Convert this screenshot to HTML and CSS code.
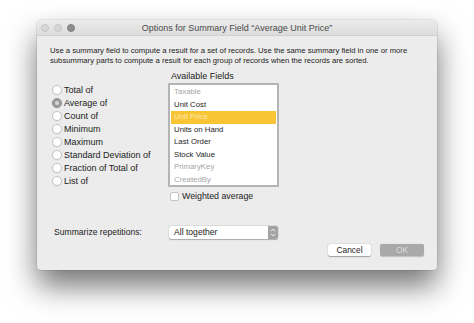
FILE: index.html
```html
<!DOCTYPE html>
<html>
<head>
<meta charset="utf-8">
<link rel="stylesheet" href="styles.css">
</head>
<body>
<div class="window">
  <div class="titlebar">
    <div class="lights">
      <span class="light"></span>
      <span class="light"></span>
      <span class="light dark"></span>
    </div>
    <div class="title">Options for Summary Field “Average Unit Price”</div>
  </div>
  <div class="content">
    <p class="desc">Use a summary field to compute a result for a set of records. Use the same summary field in one or more subsummary parts to compute a result for each group of records when the records are sorted.</p>
    <div class="main">
      <div class="radios">
        <div class="radio-row"><span class="radio"></span>Total of</div>
        <div class="radio-row"><span class="radio on"></span>Average of</div>
        <div class="radio-row"><span class="radio"></span>Count of</div>
        <div class="radio-row"><span class="radio"></span>Minimum</div>
        <div class="radio-row"><span class="radio"></span>Maximum</div>
        <div class="radio-row"><span class="radio"></span>Standard Deviation of</div>
        <div class="radio-row"><span class="radio"></span>Fraction of Total of</div>
        <div class="radio-row"><span class="radio"></span>List of</div>
      </div>
      <div class="fields">
        <div class="fields-head">Available Fields</div>
        <div class="list">
          <div class="item dim">Taxable</div>
          <div class="item">Unit Cost</div>
          <div class="item sel">Unit Price</div>
          <div class="item">Units on Hand</div>
          <div class="item">Last Order</div>
          <div class="item">Stock Value</div>
          <div class="item dim">PrimaryKey</div>
          <div class="item dim">CreatedBy</div>
        </div>
        <div class="check-row"><span class="check"></span>Weighted average</div>
      </div>
    </div>
    <div class="summ-row">
      <div class="summ-label">Summarize repetitions:</div>
      <div class="popup">
        <span class="popup-text">All together</span>
        <span class="stepper">
          <svg width="6" height="9" viewBox="0 0 6 9"><path d="M1 3.2 L3 1.2 L5 3.2 M1 5.8 L3 7.8 L5 5.8" fill="none" stroke="#fff" stroke-width="1"/></svg>
        </span>
      </div>
    </div>
    <div class="buttons">
      <div class="btn cancel">Cancel</div>
      <div class="btn ok">OK</div>
    </div>
  </div>
</div>
</body>
</html>
```

FILE: styles.css
```css
* { box-sizing: border-box; }
html, body { margin: 0; padding: 0; background: #ffffff; }
body {
  width: 474px;
  height: 323px;
  overflow: hidden;
  font-family: "Liberation Sans", Arial, sans-serif;
  color: #1e1e1e;
  padding: 20px 0 0 37px;
}
.window {
  width: 400px;
  height: 250px;
  background: #ececec;
  border-radius: 4px;
  box-shadow: 0 16px 30px rgba(0,0,0,0.55), 0 0 0 0.5px rgba(0,0,0,0.15);
  display: flex;
  flex-direction: column;
  overflow: hidden;
}
.titlebar {
  height: 16px;
  flex: none;
  position: relative;
  background: linear-gradient(#ececec, #dcdcdc);
  border-bottom: 1px solid #d0d0d0;
  display: flex;
  align-items: center;
  justify-content: center;
}
.lights {
  position: absolute;
  left: 4px;
  top: 4px;
  display: flex;
  gap: 5px;
}
.light {
  width: 8px;
  height: 8px;
  border-radius: 50%;
  background: #d6d6d6;
  border: 0.5px solid #c6c6c6;
}
.light.dark { background: #8c8c8c; border-color: #808080; }
.title {
  font-size: 9px;
  color: #4a4a4a;
  padding-top: 1px;
}
.content {
  flex: 1;
  padding: 10px 13px 12px 13px;
  display: flex;
  flex-direction: column;
}
.desc {
  margin: 0;
  font-size: 7.7px;
  line-height: 10px;
  color: #222;
}
.main {
  display: flex;
  margin-top: 4px;
  margin-left: 2px;
}
.radios {
  width: 116px;
  padding-top: 13px;
  display: flex;
  flex-direction: column;
}
.radio-row {
  height: 13px;
  display: flex;
  align-items: center;
  font-size: 9px;
  color: #222;
}
.radio {
  width: 10px;
  height: 10px;
  border-radius: 50%;
  background: #fff;
  border: 0.5px solid #c4c4c4;
  margin-right: 2px;
  box-shadow: 0 0.5px 1px rgba(0,0,0,0.08);
  display: flex;
  align-items: center;
  justify-content: center;
}
.radio.on {
  background: #9c9c9c;
  border-color: #8e8e8e;
}
.radio.on::after {
  content: "";
  width: 4px;
  height: 4px;
  border-radius: 50%;
  background: #d8d8d8;
}
.fields {
  display: flex;
  flex-direction: column;
}
.fields-head {
  height: 13px;
  font-size: 9px;
  line-height: 13px;
  padding-left: 3px;
  color: #222;
}
.list {
  width: 111px;
  height: 104px;
  background: #fff;
  border: 2px solid #b4b4b4;
  border-radius: 1px;
  padding: 1px 1px;
  display: flex;
  flex-direction: column;
}
.item {
  height: 12.5px;
  line-height: 12.5px;
  font-size: 7.8px;
  padding-left: 3px;
  color: #1e1e1e;
}
.item.dim { color: #a6a6a6; }
.item.sel { background: #f9c535; color: #fbe9b0; }
.check-row {
  height: 12px;
  margin-top: 3px;
  display: flex;
  align-items: center;
  font-size: 8.8px;
  color: #222;
}
.check {
  width: 9px;
  height: 9px;
  background: #fff;
  border: 0.5px solid #c4c4c4;
  border-radius: 2px;
  margin: 0 3px 0 2px;
}
.summ-row {
  display: flex;
  align-items: center;
  margin-top: 23px;
  margin-left: 4px;
  height: 14px;
}
.summ-label {
  width: 115px;
  font-size: 8.6px;
  color: #222;
}
.popup {
  width: 109px;
  height: 13px;
  background: #fff;
  border-radius: 2px;
  box-shadow: 0 0.5px 1px rgba(0,0,0,0.25), 0 0 0 0.5px rgba(0,0,0,0.08);
  display: flex;
  align-items: center;
  justify-content: space-between;
}
.popup-text {
  font-size: 8.6px;
  padding-left: 5px;
  color: #222;
}
.stepper {
  width: 10px;
  height: 13px;
  background: #a3a3a3;
  border-radius: 0 2px 2px 0;
  display: flex;
  align-items: center;
  justify-content: center;
}
.buttons {
  display: flex;
  justify-content: flex-end;
  gap: 9px;
  margin-top: 5px;
}
.btn {
  height: 12px;
  font-size: 8.4px;
  line-height: 12px;
  text-align: center;
  border-radius: 2px;
}
.cancel {
  width: 43px;
  background: #fff;
  color: #222;
  box-shadow: 0 0.5px 1px rgba(0,0,0,0.3), 0 0 0 0.5px rgba(0,0,0,0.06);
}
.ok {
  width: 44px;
  background: #a9a9a9;
  color: #dcdcdc;
  box-shadow: 0 0.5px 1px rgba(0,0,0,0.2);
}
```
